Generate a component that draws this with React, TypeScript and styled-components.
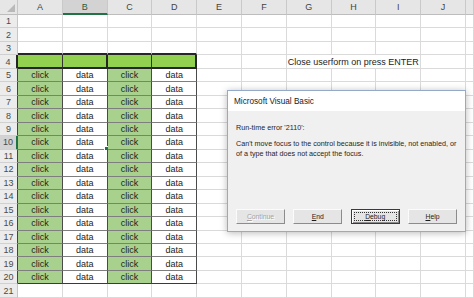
import React from 'react';
import styled, { createGlobalStyle } from 'styled-components';

const Global = createGlobalStyle`
  html, body { margin: 0; padding: 0; background: #fff; }
  body {
    width: 474px; height: 298px; overflow: hidden;
    font-family: "Liberation Sans", Arial, sans-serif;
  }
`;

const COLS = ['A', 'B', 'C', 'D', 'E', 'F', 'G', 'H', 'I', 'J', ''];
const ROWS = Array.from({ length: 21 }, (_, i) => i + 1);
const GRID = '1px solid #dadada';
const DARK = '#262626';

const Sheet = styled.div`
  position: relative;
  width: 474px;
  height: 298px;
  overflow: hidden;
  background: #fff;
  display: grid;
  grid-template-columns: 18px repeat(10, 44.8px) 1fr;
  grid-template-rows: 15px repeat(21, 13.47px);
`;

const Corner = styled.div`
  box-sizing: border-box;
  background: #e6e6e6;
  border-right: 1px solid #c6c6c6;
  border-bottom: 1px solid #bdbdbd;
  display: flex;
  align-items: flex-end;
  justify-content: flex-end;
  padding: 0 2px 2px 0;
`;

const Triangle = styled.div`
  width: 0;
  height: 0;
  border-left: 8px solid transparent;
  border-bottom: 8px solid #b9b9b9;
`;

const ColHead = styled.div<{ $sel?: boolean }>`
  box-sizing: border-box;
  display: flex;
  align-items: center;
  justify-content: center;
  background: ${(p) => (p.$sel ? '#d3d3d3' : '#e6e6e6')};
  border-right: 1px solid #c9c9c9;
  border-bottom: ${(p) => (p.$sel ? '2px solid #217346' : '1px solid #bdbdbd')};
  color: ${(p) => (p.$sel ? '#2b5d3f' : '#444')};
  font-size: 9px;
`;

const RowHead = styled.div<{ $sel?: boolean; $rb?: string }>`
  box-sizing: border-box;
  display: flex;
  align-items: center;
  justify-content: center;
  background: ${(p) => (p.$sel ? '#d3d3d3' : '#ececec')};
  border-right: ${(p) => (p.$sel ? '2px solid #217346' : p.$rb ?? '1px solid #c6c6c6')};
  border-bottom: 1px solid #d0d0d0;
  color: #4a4a4a;
  font-size: 9px;
`;

const Cell = styled.div<{ $fill?: string; $rb?: string; $bb?: string; $span?: number; $left?: boolean }>`
  box-sizing: border-box;
  position: relative;
  display: flex;
  align-items: center;
  justify-content: ${(p) => (p.$left ? 'flex-start' : 'center')};
  padding-left: ${(p) => (p.$left ? '1px' : '0')};
  grid-column: span ${(p) => p.$span ?? 1};
  background: ${(p) => p.$fill ?? 'transparent'};
  border-right: ${(p) => p.$rb ?? GRID};
  border-bottom: ${(p) => p.$bb ?? GRID};
  font-size: 9px;
  color: #1c1c1c;
  white-space: nowrap;
`;

const Handle = styled.span`
  position: absolute;
  right: -2px;
  bottom: -2px;
  width: 3px;
  height: 3px;
  background: #217346;
  border: 1px solid #fff;
`;

const Dialog = styled.div`
  position: absolute;
  left: 227px;
  top: 90px;
  width: 239px;
  height: 142px;
  box-sizing: border-box;
  border: 1px solid #93abc8;
  background: #f0f0f0;
  box-shadow: 0 1px 7px rgba(0, 0, 0, 0.28);
  display: flex;
  flex-direction: column;
  font-family: "Liberation Sans", Arial, sans-serif;
`;

const TitleBar = styled.div`
  height: 20px;
  flex: none;
  background: #fff;
  display: flex;
  align-items: center;
  padding-left: 6px;
  font-size: 8.2px;
  color: #1a1a1a;
`;

const DialogBody = styled.div`
  flex: 1;
  display: flex;
  flex-direction: column;
  padding: 12px 8px 7px 8px;
`;

const ErrorTitle = styled.div`
  font-size: 7.2px;
  line-height: 10px;
  color: #1f1f1f;
`;

const Message = styled.div`
  margin-top: 6px;
  font-size: 7.2px;
  line-height: 10px;
  color: #1f1f1f;
`;

const ButtonRow = styled.div`
  margin-top: auto;
  display: flex;
  justify-content: space-between;
`;

const Btn = styled.div<{ $disabled?: boolean; $focus?: boolean }>`
  box-sizing: border-box;
  width: 49px;
  height: 15px;
  display: flex;
  background: #e5e5e5;
  border: 1px solid;
  border-color: ${(p) => (p.$focus ? '#3a3a3a' : '#fbfbfb #8c8c8c #8c8c8c #fbfbfb')};
  box-shadow: ${(p) => (p.$focus ? 'inset 1px 1px 0 #fff, inset -1px -1px 0 #8c8c8c' : 'none')};
  font-size: 6.8px;
  color: ${(p) => (p.$disabled ? '#a3a3a3' : '#1c1c1c')};
  text-shadow: ${(p) => (p.$disabled ? '1px 1px 0 #fff' : 'none')};
`;

const BtnLabel = styled.span<{ $focus?: boolean }>`
  flex: 1;
  margin: 2px;
  display: flex;
  align-items: center;
  justify-content: center;
  border: 1px dotted ${(p) => (p.$focus ? '#333' : 'transparent')};
`;

const Key = styled.span`
  text-decoration: underline;
`;

type CellSpec = { fill?: string; rb?: string; bb?: string; text?: string; span?: number; left?: boolean; sel?: boolean; skip?: boolean };

function cellSpec(r: number, c: number): CellSpec {
  const spec: CellSpec = {};
  if (r === 3 && c <= 3) spec.bb = `2px solid ${DARK}`;
  if (r === 4 && c <= 3) {
    spec.fill = '#92d050';
    spec.bb = `2px solid ${DARK}`;
    spec.rb = c === 1 || c === 3 ? `2px solid ${DARK}` : '1px solid #333';
  }
  if (r >= 5 && r <= 20 && c <= 3) {
    const clickCol = c === 0 || c === 2;
    spec.fill = clickCol ? '#a9d18e' : '#fff';
    spec.text = clickCol ? 'click' : 'data';
    spec.rb = '1px solid #4a4a4a';
    spec.bb = r === 20 ? '1px solid #3a3a3a' : '1px solid #7e7e7e';
  }
  if (r === 10 && c === 1) spec.sel = true;
  if (r === 4 && c === 6) {
    spec.text = 'Close userform on press ENTER';
    spec.span = 3;
    spec.left = true;
  }
  if (r === 4 && (c === 7 || c === 8)) spec.skip = true;
  return spec;
}

export default function App() {
  return (
    <>
      <Global />
      <Sheet>
        <Corner>
          <Triangle />
        </Corner>
        {COLS.map((c, i) => (
          <ColHead key={`h${i}`} $sel={c === 'B'}>
            {c}
          </ColHead>
        ))}
        {ROWS.map((r) => (
          <React.Fragment key={r}>
            <RowHead
              $sel={r === 10}
              $rb={r === 4 ? `2px solid ${DARK}` : r >= 5 && r <= 20 ? '1px solid #444' : undefined}
            >
              {r}
            </RowHead>
            {COLS.map((_, c) => {
              const s = cellSpec(r, c);
              if (s.skip) return null;
              return (
                <Cell key={c} $fill={s.fill} $rb={s.rb} $bb={s.bb} $span={s.span} $left={s.left}>
                  {s.text}
                  {s.sel && <Handle />}
                </Cell>
              );
            })}
          </React.Fragment>
        ))}
        <Dialog>
          <TitleBar>Microsoft Visual Basic</TitleBar>
          <DialogBody>
            <ErrorTitle>Run-time error '2110':</ErrorTitle>
            <Message>
              Can't move focus to the control because it is invisible, not enabled, or
              <br />
              of a type that does not accept the focus.
            </Message>
            <ButtonRow>
              <Btn $disabled>
                <BtnLabel>
                  <Key>C</Key>ontinue
                </BtnLabel>
              </Btn>
              <Btn>
                <BtnLabel>
                  <Key>E</Key>nd
                </BtnLabel>
              </Btn>
              <Btn $focus>
                <BtnLabel $focus>
                  <Key>D</Key>ebug
                </BtnLabel>
              </Btn>
              <Btn>
                <BtnLabel>
                  <Key>H</Key>elp
                </BtnLabel>
              </Btn>
            </ButtonRow>
          </DialogBody>
        </Dialog>
      </Sheet>
    </>
  );
}
